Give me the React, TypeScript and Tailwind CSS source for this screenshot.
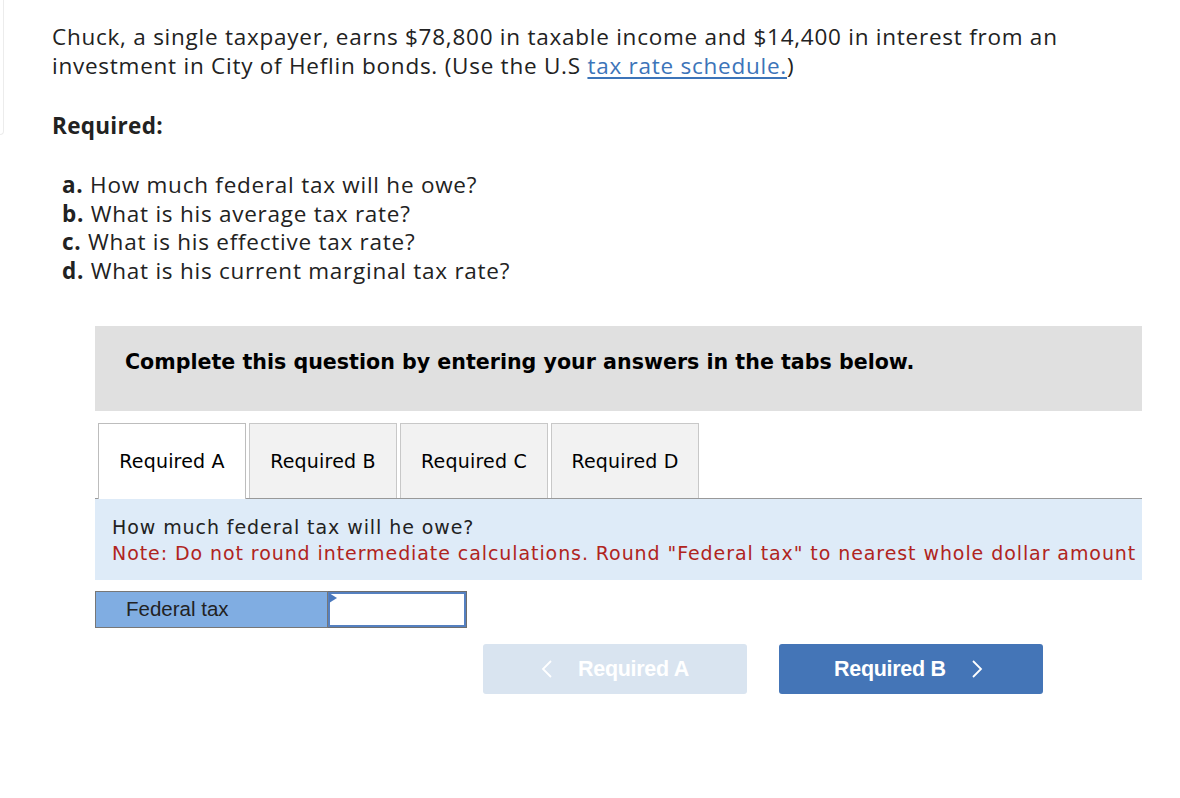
import React from "react";

export default function App() {
  const main = { fontFamily: "'Open Sans', Lato, sans-serif" };
  const verdana = { fontFamily: "'DejaVu Sans', Verdana, sans-serif" };
  const arial = { fontFamily: "'Liberation Sans', Arial, sans-serif" };
  return (
    <div className="relative min-h-[798px] w-[1180px] bg-white text-[#222]">
      <div className="absolute left-0 top-[-10px] h-[145px] w-[4px] rounded-br-[6px] border-r border-b border-[#ececec]" />
      <div className="pl-[52px] pt-[22px] text-[22.5px] leading-[29px] tracking-[0.75px]" style={main}>
        <p>
          Chuck, a single taxpayer, earns $78,800 in taxable income and $14,400 in interest from an
          <br />
          investment in City of Heflin bonds. (Use the U.S{" "}
          <a className="text-[#3c74b9] underline underline-offset-[3px]">tax rate schedule.</a>)
        </p>
        <p className="mt-[31px] font-bold tracking-[0.3px]">Required:</p>
        <div className="mt-[31px] pl-[10px] leading-[28.7px]">
          <p><b>a.</b> How much federal tax will he owe?</p>
          <p><b>b.</b> What is his average tax rate?</p>
          <p><b>c.</b> What is his effective tax rate?</p>
          <p><b>d.</b> What is his current marginal tax rate?</p>
        </div>
      </div>

      <div className="ml-[95px] mt-[40px] w-[1047px]">
        <div
          className="flex h-[85px] items-center bg-[#e0e0e0] pb-[12px] pl-[30px] text-[20.6px] font-bold text-black"
          style={verdana}
        >
          Complete this question by entering your answers in the tabs below.
        </div>

        <div
          className="mt-[12px] flex gap-[3px] border-b border-[#999] pl-[3px] text-[19px] tracking-[0.2px] text-black"
          style={verdana}
        >
          {["Required A", "Required B", "Required C", "Required D"].map((t, i) => (
            <div
              key={t}
              className={
                i === 0
                  ? "-mb-px flex h-[76px] w-[148px] items-center justify-center border border-b-0 border-[#bdbdbd] bg-white"
                  : "flex h-[75px] w-[148px] items-center justify-center border border-b-0 border-[#c8c8c8] bg-[#f2f2f2]"
              }
            >
              {t}
            </div>
          ))}
        </div>

        <div
          className="whitespace-nowrap bg-[#deebf8] pb-[14px] pl-[17px] pt-[15px] text-[19px] leading-[26px] tracking-[0.92px]"
          style={verdana}
        >
          <p className="text-[#222]">How much federal tax will he owe?</p>
          <p className="text-[#b02420]">
            Note: Do not round intermediate calculations. Round "Federal tax" to nearest whole dollar amount
          </p>
        </div>

        <div className="mt-[11px] flex h-[37px]" style={arial}>
          <div className="flex w-[233px] items-center border border-[#777] bg-[#80ade2] pl-[30px] text-[20.5px] text-[#222]">
            Federal tax
          </div>
          <div className="relative w-[139px] border border-l-0 border-[#6e6e6e] bg-white">
            <div className="h-full w-full border-2 border-[#5580c0]" />
            <div className="absolute left-[1px] top-[1px] h-0 w-0 border-y-[5px] border-l-[8px] border-y-transparent border-l-[#4a78bd]" />
          </div>
        </div>

        <div className="ml-[388px] mt-[16px] flex gap-[32px] text-[21.5px] font-bold text-white" style={arial}>
          <div className="flex h-[50px] w-[264px] items-center rounded-[3px] bg-[#d9e4f0] pl-[58px]">
            <svg width="12" height="20" viewBox="0 0 12 20" className="mr-[25px]">
              <path d="M10 2 L2 10 L10 18" fill="none" stroke="white" strokeWidth="1.8" />
            </svg>
            <span className="tracking-[-0.3px]">Required A</span>
          </div>
          <div className="flex h-[50px] w-[264px] items-center rounded-[3px] bg-[#4475b7] pl-[55px]">
            <span className="tracking-[-0.3px]">Required B</span>
            <svg width="12" height="20" viewBox="0 0 12 20" className="ml-[25px]">
              <path d="M2 2 L10 10 L2 18" fill="none" stroke="white" strokeWidth="1.8" />
            </svg>
          </div>
        </div>
      </div>
    </div>
  );
}
